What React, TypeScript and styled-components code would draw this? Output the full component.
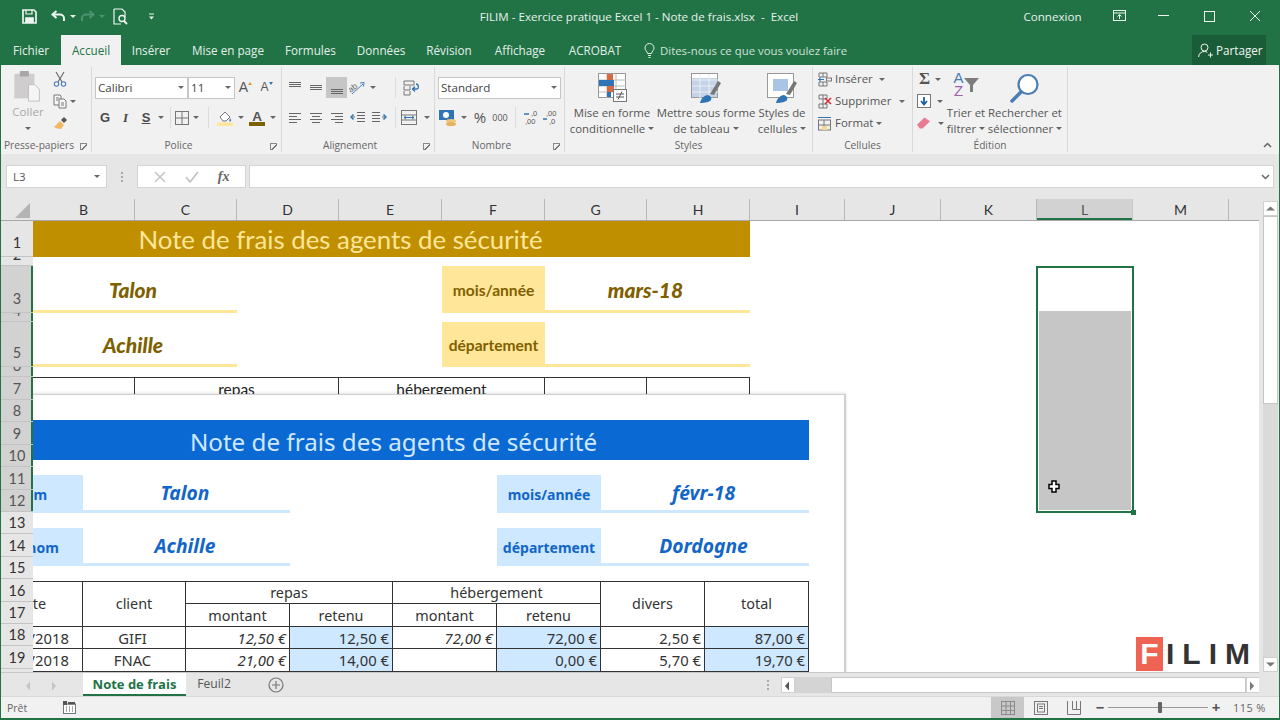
import React from 'react';
import styled, { createGlobalStyle } from 'styled-components';

const GlobalStyle = createGlobalStyle`
  html, body { margin: 0; padding: 0; width: 1280px; height: 720px; overflow: hidden; }
  * { box-sizing: border-box; }
`;

const UI = `"Open Sans", "Liberation Sans", sans-serif`;
const CALIBRI = `Lato, "Liberation Sans", sans-serif`;
const PIC = `"Noto Sans", "Liberation Sans", sans-serif`;
const GREEN = '#217346';

const Window = styled.div`
  width: 1280px;
  height: 720px;
  background: ${GREEN};
  display: flex;
  flex-direction: column;
  padding: 0 1px 2px 1px;
  font-family: ${UI};
  color: #444;
  overflow: hidden;
`;

/* title bar */
const TitleBar = styled.div`
  height: 33px;
  flex: none;
  display: grid;
  grid-template-columns: 441px 394px 1fr;
  align-items: center;
  padding-bottom: 1px;
  color: #e8f1ec;
`;
const Qat = styled.div`
  display: flex;
  align-items: center;
  padding-left: 21px;
`;
const QatSlot = styled.div<{ $w: number }>`
  width: ${p => p.$w}px;
  display: flex;
  align-items: center;
`;
const WhiteCaret = styled.span<{ $dim?: boolean }>`
  width: 0;
  height: 0;
  border-left: 3px solid transparent;
  border-right: 3px solid transparent;
  border-top: 3px solid ${p => (p.$dim ? '#4f9270' : '#e8f1ec')};
  margin-left: 4px;
`;
const Title = styled.div`
  text-align: center;
  font-size: 11.6px;
  white-space: pre;
`;
const WinControls = styled.div`
  display: flex;
  align-items: center;
  justify-content: flex-end;
  padding-right: 2px;
  font-size: 11.6px;
`;
const WinBtn = styled.div<{ $w: number }>`
  width: ${p => p.$w}px;
  display: flex;
  align-items: center;
  justify-content: center;
`;

/* tabs */
const TabBar = styled.div`
  height: 32px;
  flex: none;
  display: flex;
  align-items: stretch;
  padding-top: 2px;
  color: #e4efe9;
  font-size: 11.7px;
`;
const Tab = styled.div<{ $w: number; $active?: boolean }>`
  width: ${p => p.$w}px;
  display: flex;
  align-items: center;
  justify-content: center;
  background: ${p => (p.$active ? '#f1f1f1' : 'transparent')};
  color: ${p => (p.$active ? GREEN : 'inherit')};
`;
const TellMe = styled.div`
  display: flex;
  align-items: center;
  gap: 5px;
  padding-left: 12px;
  width: 560px;
  font-size: 11.4px;
  color: #cfe2d8;
`;
const ShareBtn = styled.div`
  width: 74px;
  background: #1a5c38;
  display: flex;
  align-items: center;
  gap: 3px;
  padding-left: 6px;
  color: #eef5f1;
`;

/* ribbon */
const Ribbon = styled.div`
  height: 89px;
  flex: none;
  background: #f1f1f1;
  display: flex;
  padding: 2px 0 2px 2px;
  position: relative;
  font-size: 11.4px;
  line-height: 15.5px;
  color: #555;
`;
const Group = styled.div<{ $w: number }>`
  width: ${p => p.$w}px;
  flex: none;
  display: flex;
  flex-direction: column;
  border-right: 1px solid #d9d9d9;
`;
const GroupBody = styled.div`
  flex: 1;
  display: flex;
  min-height: 0;
`;
const GroupLabel = styled.div<{ $launcher?: boolean }>`
  height: 17px;
  margin-bottom: -2px;
  padding-top: 1px;
  display: grid;
  grid-template-columns: ${p => (p.$launcher ? '1fr auto 1fr 16px' : '1fr auto 1fr')};
  align-items: center;
  font-size: 10.2px;
  color: #666;
`;
const GroupName = styled.span`
  white-space: nowrap;
`;
const Launcher = styled.span`
  justify-self: end;
  width: 7px;
  height: 7px;
  margin-right: 4px;
  border-left: 1px solid #888;
  border-top: 1px solid #888;
  background: linear-gradient(135deg, transparent 45%, #777 45%, #777 60%, transparent 60%);
`;
const Rows = styled.div<{ $left?: number }>`
  display: flex;
  flex-direction: column;
  gap: 9px;
  padding: 10px 0 0 ${p => p.$left ?? 0}px;
`;
const Row = styled.div`
  height: 21px;
  display: flex;
  align-items: center;
`;
const Tool = styled.div<{ $w: number; $on?: boolean }>`
  width: ${p => p.$w}px;
  height: 21px;
  flex: none;
  display: flex;
  align-items: center;
  justify-content: center;
  background: ${p => (p.$on ? '#c6c6c6' : 'transparent')};
`;
const Caret = styled.span<{ $l?: number }>`
  width: 0;
  height: 0;
  flex: none;
  margin-left: ${p => p.$l ?? 0}px;
  border-left: 3px solid transparent;
  border-right: 3px solid transparent;
  border-top: 3px solid #666;
`;
const ToolSep = styled.span<{ $l?: number; $r?: number }>`
  width: 1px;
  height: 21px;
  flex: none;
  background: #dcdcdc;
  margin-left: ${p => p.$l ?? 0}px;
  margin-right: ${p => p.$r ?? 0}px;
`;
const Combo = styled.div<{ $w: number }>`
  width: ${p => p.$w}px;
  height: 22px;
  flex: none;
  background: #fff;
  border: 1px solid #c6c6c6;
  display: flex;
  align-items: center;
  justify-content: space-between;
  padding: 0 3px 0 2px;
  font-size: 11.6px;
  color: #444;
`;
const FontLetter = styled.span<{ $serif?: boolean; $under?: boolean; $size?: number }>`
  font-family: ${p => (p.$serif ? '"Liberation Serif", serif' : '"Liberation Sans", sans-serif')};
  font-style: ${p => (p.$serif ? 'italic' : 'normal')};
  font-weight: 700;
  font-size: ${p => p.$size ?? 13}px;
  text-decoration: ${p => (p.$under ? 'underline' : 'none')};
  color: #4a4a4a;
`;
const GrowLetter = styled.span<{ $size: number }>`
  font-size: ${p => p.$size}px;
  color: #555;
  display: flex;
  align-items: flex-start;
  font-family: "Liberation Sans", sans-serif;
`;
const Mark = styled.span<{ $color: string; $down?: boolean }>`
  width: 0;
  height: 0;
  margin-top: 2px;
  border-left: 2px solid transparent;
  border-right: 2px solid transparent;
  ${p => (p.$down ? `border-top: 3px solid ${p.$color};` : `border-bottom: 3px solid ${p.$color};`)}
`;
const NumText = styled.span<{ $size: number }>`
  font-size: ${p => p.$size}px;
  color: #555;
`;
const PasteCol = styled.div`
  width: 50px;
  display: flex;
  flex-direction: column;
  align-items: center;
  padding: 4px 0 0 0;
  color: #a8a8a8;
  font-size: 11.6px;
`;
const PasteLabel = styled.span`
  margin-top: 2px;
  margin-bottom: 7px;
`;
const SmallCol = styled.div`
  display: flex;
  flex-direction: column;
  padding-top: 1px;
`;
const SmallRow = styled.div`
  height: 22px;
  display: flex;
  align-items: center;
  gap: 3px;
  white-space: nowrap;
`;
const BigBtn = styled.div<{ $w: number }>`
  width: ${p => p.$w}px;
  flex: none;
  display: flex;
  flex-direction: column;
  align-items: center;
  padding-top: 6px;
  text-align: center;
  white-space: nowrap;
`;
const BigIcon = styled.div`
  height: 32px;
  display: flex;
  align-items: flex-start;
  justify-content: center;
`;
const LabelLine = styled.div`
  display: flex;
  align-items: center;
  gap: 3px;
`;
const SortIcon = styled.div`
  display: flex;
  align-items: center;
  margin-top: -2px;
`;
const AZ = styled.div`
  display: flex;
  flex-direction: column;
  font-size: 15px;
  line-height: 13px;
  font-family: "Liberation Sans", sans-serif;
`;
const AZLetter = styled.span<{ $c: string }>`
  color: ${p => p.$c};
`;
const CellsList = styled.div<{ $w?: number }>`
  padding: 1px 0 0 4px;
  display: flex;
  flex-direction: column;
  ${p => (p.$w ? `width: ${p.$w}px; flex: none;` : '')}
`;
const Sigma = styled.span`
  font-family: "Liberation Serif", serif;
  font-size: 17px;
  font-weight: 700;
  color: #555;
  width: 15px;
  text-align: center;
`;
const Collapse = styled.div`
  position: absolute;
  right: 7px;
  bottom: 3px;
`;

/* formula bar */
const FormulaBar = styled.div`
  height: 43px;
  flex: none;
  background: #e6e6e6;
  display: flex;
  align-items: flex-start;
  padding: 11px 5px 0 5px;
`;
const NameBox = styled.div`
  width: 101px;
  height: 23px;
  flex: none;
  background: #fff;
  border: 1px solid #d4d4d4;
  display: flex;
  align-items: center;
  justify-content: space-between;
  padding: 0 6px;
  font-size: 11.5px;
  color: #555;
`;
const Dots = styled.div`
  width: 30px;
  height: 23px;
  flex: none;
  display: flex;
  flex-direction: column;
  align-items: center;
  justify-content: center;
  gap: 2px;
`;
const Dot = styled.span`
  width: 2px;
  height: 2px;
  background: #aaa;
`;
const FxBox = styled.div`
  width: 109px;
  height: 23px;
  flex: none;
  background: #fff;
  border: 1px solid #d4d4d4;
  display: flex;
  align-items: center;
  justify-content: space-around;
  padding: 0 6px;
`;
const FxText = styled.span`
  font-family: "Liberation Serif", serif;
  font-style: italic;
  font-size: 14px;
  font-weight: 700;
  color: #666;
`;
const FormulaInput = styled.div`
  flex: 1;
  height: 23px;
  margin-left: 3px;
  background: #fff;
  border: 1px solid #d4d4d4;
  display: flex;
  align-items: center;
  justify-content: flex-end;
  padding-right: 3px;
`;

/* sheet */
const SheetWrap = styled.div`
  flex: 1;
  min-height: 0;
  display: flex;
  background: #e6e6e6;
`;
const SheetMain = styled.div`
  width: 1258px;
  flex: none;
  display: flex;
  flex-direction: column;
`;
const ColHeaders = styled.div`
  height: 24px;
  flex: none;
  display: flex;
  background: #e6e6e6;
  border-bottom: 1px solid #a8a8a8;
  font-family: ${CALIBRI};
  font-size: 14px;
  color: #333;
`;
const Corner = styled.div`
  width: 32px;
  flex: none;
  display: flex;
  align-items: flex-end;
  justify-content: flex-end;
  padding: 0 2px 2px 0;
`;
const ColHead = styled.div<{ $w: number; $sel?: boolean }>`
  width: ${p => p.$w}px;
  flex: none;
  display: flex;
  align-items: center;
  justify-content: center;
  margin-top: 2px;
  border-right: 1px solid ${p => (p.$sel ? '#c6c6c6' : '#b8b8b8')};
  background: ${p => (p.$sel ? '#d2d2d2' : 'transparent')};
  color: ${p => (p.$sel ? '#555' : '#333')};
  ${p => (p.$sel ? `box-shadow: inset 0 -2px 0 ${GREEN};` : '')}
`;
const SheetBody = styled.div`
  flex: 1;
  min-height: 0;
  display: flex;
  overflow: hidden;
`;
const RowHeaders = styled.div`
  width: 32px;
  flex: none;
  display: flex;
  flex-direction: column;
  font-family: ${CALIBRI};
  font-size: 14.5px;
  color: #333;
  background: #e6e6e6;
`;
const RowHead = styled.div<{ $h: number; $sel?: boolean }>`
  height: ${p => p.$h}px;
  flex: none;
  overflow: hidden;
  display: flex;
  align-items: flex-end;
  justify-content: center;
  line-height: 20px;
  padding-bottom: ${p => (p.$h > 30 ? 3 : 0)}px;
  border-bottom: 1px solid #c4c4c4;
  background: ${p => (p.$sel ? '#d2d2d2' : 'transparent')};
  color: ${p => (p.$sel ? '#555' : '#333')};
  ${p => (p.$sel ? `box-shadow: inset -2px 0 0 ${GREEN};` : '')}
`;
const Cells = styled.div`
  flex: 1;
  position: relative;
  background: #fff;
  overflow: hidden;
`;
const GoldGrid = styled.div`
  display: grid;
  width: 717px;
  grid-template-columns: 102px 102px 102px 103px 103px 102px 103px;
  grid-template-rows: 36px 9px 47px 9px 45px 10px 23px 23px;
  font-family: ${CALIBRI};
  color: #7f6000;
`;
const GoldBanner = styled.div`
  grid-column: 1 / 8;
  background: #bf8f00;
  color: #ffe699;
  font-size: 25.8px;
  padding-right: 102px;
  display: flex;
  align-items: center;
  justify-content: center;
`;
const Gap = styled.div`
  grid-column: 1 / 8;
`;
const GoldValue = styled.div<{ $span: string }>`
  grid-column: ${p => p.$span};
  border-bottom: 3px solid #ffe699;
  display: flex;
  align-items: center;
  justify-content: center;
  padding: 3px 4px 0 0;
  font-size: 21px;
  font-weight: 900;
  font-style: italic;
`;
const GoldLabel = styled.div`
  background: #ffe699;
  display: flex;
  align-items: center;
  justify-content: center;
  font-size: 15.6px;
  font-weight: 700;
  white-space: nowrap;
`;
const Blank = styled.div<{ $span: string }>`
  grid-column: ${p => p.$span};
`;
const HeadCell = styled.div<{ $span: string; $rows?: number }>`
  grid-column: ${p => p.$span};
  grid-row: span ${p => p.$rows ?? 1};
  border-top: 1px solid #333;
  border-right: 1px solid #333;
  display: flex;
  align-items: center;
  justify-content: center;
  font-size: 15.5px;
  color: #222;
`;

/* pasted picture over the sheet */
const Picture = styled.div`
  position: absolute;
  left: 0;
  top: 173px;
  width: 813px;
  height: 290px;
  background: #fff;
  border-top: 1px solid #d0d0d0;
  border-right: 2px solid #cfcfcf;
  box-shadow: 0 -1px 3px rgba(0, 0, 0, 0.12);
  overflow: hidden;
  font-family: ${PIC};
`;
const PicContent = styled.div`
  width: 829px;
  margin-left: -53px;
  padding-top: 25px;
`;
const PicBanner = styled.div`
  height: 40px;
  background: #0a69d2;
  color: #d0e8ff;
  font-size: 24.2px;
  padding: 3px 2px 0 0;
  display: flex;
  align-items: center;
  justify-content: center;
`;
const PicInfo = styled.div`
  display: grid;
  height: 38px;
  grid-template-columns: 103px 103px 104px 103px 104px 104px 104px 104px;
  margin-top: 15px;
`;
const PicLabel = styled.div`
  background: #cde8ff;
  color: #1266c8;
  font-weight: 700;
  font-size: 14px;
  display: flex;
  align-items: center;
  justify-content: center;
  white-space: nowrap;
`;
const PicValue = styled.div<{ $span: string }>`
  grid-column: ${p => p.$span};
  border-bottom: 3px solid #cde8ff;
  color: #1266c8;
  font-size: 19.3px;
  font-weight: 700;
  font-style: italic;
  padding-right: 3px;
  display: flex;
  align-items: center;
  justify-content: center;
`;
const PicTable = styled.table`
  margin: 15px 0 0 -1px;
  border-collapse: collapse;
  table-layout: fixed;
  width: 829px;
  font-size: 14.8px;
  color: #333;
`;
const Th = styled.th`
  font-weight: 400;
  font-size: 14.4px;
  border: 1.5px solid #333;
  padding: 0;
  height: 22.4px;
`;
const Td = styled.td<{ $blue?: boolean; $it?: boolean; $center?: boolean }>`
  border: 1.5px solid #333;
  height: 22.4px;
  padding: 1px 3px 0 0;
  line-height: 1;
  text-align: ${p => (p.$center ? 'center' : 'right')};
  font-style: ${p => (p.$it ? 'italic' : 'normal')};
  background: ${p => (p.$blue ? '#cde8ff' : '#fff')};
  white-space: nowrap;
  overflow: hidden;
`;

/* selection, cursor, logo */
const Selection = styled.div`
  position: absolute;
  left: 1003px;
  top: 45px;
  width: 98px;
  height: 247px;
  border: 2px solid ${GREEN};
  background: #c6c6c6;
  box-shadow: inset 0 0 0 1px #fff;
`;
const ActiveCell = styled.div`
  height: 43px;
  background: #fff;
`;
const Handle = styled.span`
  position: absolute;
  right: -4px;
  bottom: -4px;
  width: 5px;
  height: 5px;
  background: ${GREEN};
`;
const CursorMark = styled.div`
  position: absolute;
  left: 1015px;
  top: 259px;
  display: flex;
`;
const Logo = styled.div`
  position: absolute;
  right: 5px;
  bottom: 1px;
  display: flex;
  align-items: center;
  font-family: "Liberation Sans", sans-serif;
  font-weight: 700;
`;
const LogoSquare = styled.div`
  width: 27px;
  height: 34px;
  background: #ef6353;
  color: #fff;
  font-size: 30px;
  line-height: 34px;
  text-align: center;
`;
const LogoText = styled.div`
  font-size: 30px;
  letter-spacing: 8px;
  color: #333;
  padding-left: 3px;
  width: 91px;
  white-space: nowrap;
`;

/* scroll bars */
const VScroll = styled.div`
  flex: 1;
  display: flex;
  flex-direction: column;
  align-items: center;
  padding: 4px 0 0 3px;
  background: #e6e6e6;
`;
const ScrollBtn = styled.div<{ $h?: number; $w?: number }>`
  width: ${p => p.$w ?? 15}px;
  height: ${p => p.$h ?? 15}px;
  flex: none;
  background: #fff;
  border: 1px solid #d0d0d0;
  display: flex;
  align-items: center;
  justify-content: center;
`;
const VThumb = styled.div`
  width: 15px;
  height: 188px;
  flex: none;
  background: #fff;
  border: 1px solid #c6c6c6;
`;
const VTrack = styled.div`
  flex: 1;
  width: 15px;
  background: #dadada;
`;
const VFoot = styled.div`
  height: 24px;
  flex: none;
`;

/* sheet tabs */
const TabsBar = styled.div`
  height: 24px;
  flex: none;
  background: #e6e6e6;
  border-top: 1px solid #c8c8c8;
  display: flex;
  align-items: stretch;
  font-size: 12.2px;
`;
const TabNav = styled.div`
  width: 82px;
  flex: none;
  display: flex;
  align-items: center;
  justify-content: center;
  gap: 17px;
`;
const SheetTab = styled.div<{ $active?: boolean; $w: number }>`
  width: ${p => p.$w}px;
  flex: none;
  display: flex;
  align-items: center;
  justify-content: center;
  padding-bottom: 2px;
  background: ${p => (p.$active ? '#fff' : 'transparent')};
  color: ${p => (p.$active ? GREEN : '#555')};
  font-weight: ${p => (p.$active ? 700 : 400)};
  font-size: ${p => (p.$active ? 13 : 12.2)}px;
  ${p => (p.$active ? `box-shadow: inset 0 -2px 0 ${GREEN};` : '')}
`;
const TabSep = styled.span`
  width: 1px;
  height: 15px;
  align-self: center;
  background: #aaa;
`;
const AddTab = styled.div`
  width: 68px;
  flex: none;
  display: flex;
  align-items: center;
  justify-content: center;
`;
const DotsTab = styled.div`
  width: 485px;
  flex: none;
  display: flex;
  align-items: center;
  justify-content: flex-end;
  gap: 12px;
`;
const HScroll = styled.div`
  flex: 1;
  display: flex;
  align-items: center;
`;
const HTrack = styled.div`
  width: 36px;
  height: 16px;
  background: #d4d4d4;
`;
const HThumb = styled.div`
  width: 415px;
  height: 16px;
  background: #fff;
  border: 1px solid #c6c6c6;
`;
const DotColumn = styled.div`
  display: flex;
  flex-direction: column;
  gap: 2px;
`;

/* status bar */
const StatusBar = styled.div`
  height: 22px;
  flex: none;
  background: #f1f1f1;
  border-top: 1px solid #d8d8d8;
  display: flex;
  align-items: center;
  font-size: 10.5px;
  color: #666;
`;
const StatusText = styled.span`
  width: 62px;
  padding-left: 6px;
`;
const StatusRight = styled.div`
  margin-left: auto;
  height: 100%;
  display: flex;
  align-items: center;
`;
const ViewBtn = styled.div<{ $on?: boolean }>`
  width: 33px;
  height: 100%;
  display: flex;
  align-items: center;
  justify-content: center;
  background: ${p => (p.$on ? '#c8c8c8' : 'transparent')};
`;
const ZoomSlider = styled.div`
  width: 100px;
  height: 1px;
  background: #999;
  position: relative;
`;
const ZoomThumb = styled.span`
  position: absolute;
  left: 50px;
  top: -5px;
  width: 4px;
  height: 11px;
  border-radius: 1px;
  background: #666;
`;
const ZoomValue = styled.span`
  width: 55px;
  padding-left: 9px;
  font-size: 11px;
  letter-spacing: 0.4px;
`;
const ZoomSign = styled.span<{ $m?: number }>`
  width: 16px;
  margin-left: ${p => p.$m ?? 0}px;
  text-align: center;
  font-size: 15px;
  line-height: 15px;
  font-weight: 700;
  color: #555;
`;
const Flip = styled.span`
  display: flex;
  transform: scaleX(-1);
`;

/* ---- drawings ---- */
const W = '#eef5f1';

const SaveIcon = () => (
  <svg width="15" height="15" viewBox="0 0 15 15" fill="none" stroke={W} strokeWidth="1.7">
    <path d="M1 1h11l2 2v11H1z" />
    <path d="M4 1v4h6V1" strokeWidth="1.2" />
    <path d="M4 14V9h7v5" fill={W} />
  </svg>
);
const UndoIcon = ({ color = W }: { color?: string }) => (
  <svg width="15" height="12" viewBox="0 0 15 12" fill="none" stroke={color} strokeWidth="2">
    <path d="M5.5 1 1.5 4.5 5.5 8" />
    <path d="M2 4.5h7a4 4 0 0 1 4 4V11" />
  </svg>
);
const PreviewIcon = () => (
  <svg width="16" height="17" viewBox="0 0 16 17" fill="none" stroke={W} strokeWidth="1.2">
    <path d="M1 1h8l3 3v5M1 1v15h7" />
    <circle cx="9" cy="10.5" r="3" strokeWidth="1.4" />
    <path d="m11 13 3 3" strokeWidth="1.8" />
  </svg>
);
const QatMore = () => (
  <svg width="7" height="7" viewBox="0 0 7 7" fill={W}>
    <rect x="1" y="0.5" width="5" height="1" />
    <path d="M1 3.5h5L3.5 6.5z" />
  </svg>
);
const RibbonDisplay = () => (
  <svg width="14" height="12" viewBox="0 0 14 12" fill="none" stroke={W}>
    <rect x="0.5" y="0.5" width="12" height="10" />
    <path d="M1 3h11M6.5 9V5M4.5 6.5l2-2 2 2" />
  </svg>
);
const Minimize = () => (
  <svg width="11" height="2" viewBox="0 0 11 2"><rect width="11" height="1" fill={W} /></svg>
);
const Maximize = () => (
  <svg width="11" height="11" viewBox="0 0 11 11" fill="none" stroke={W}><rect x="0.5" y="0.5" width="10" height="10" /></svg>
);
const CloseX = () => (
  <svg width="12" height="12" viewBox="0 0 12 12" stroke={W}><path d="M1 1l10 10M11 1 1 11" /></svg>
);
const Bulb = () => (
  <svg width="11" height="15" viewBox="0 0 11 15" fill="none" stroke="#e4efe9">
    <path d="M3.5 10.5C3 8 1 7.5 1 5a4.5 4.5 0 0 1 9 0c0 2.5-2 3-2.500 5.500z" />
    <path d="M4 12.500h3M4.500 14.500h2" />
  </svg>
);
const Person = () => (
  <svg width="15" height="15" viewBox="0 0 15 15" fill="none" stroke="#eef5f1">
    <circle cx="6.500" cy="4.500" r="3.500" />
    <path d="M0.500 14c.5-3.500 2.500-5.500 6-5.500 1.200 0 2 .3 2.800.8M10 12h5M12.500 9.500v5" />
  </svg>
);
const Clipboard = () => (
  <svg width="28" height="31" viewBox="0 0 30 34">
    <rect x="0" y="3" width="22" height="27" fill="#cfcdcd" />
    <rect x="6" y="0" width="10" height="6" rx="1" fill="#a9a8a8" />
    <path d="M15.500 15h7l5 5v13h-12z" fill="#f5f5f5" stroke="#bdbdbd" />
  </svg>
);
const Scissors = () => (
  <svg width="14" height="16" viewBox="0 0 14 16" fill="none" stroke="#666" strokeWidth="1.100">
    <path d="M3 1l6 10M11 1 5 11" />
    <circle cx="3.500" cy="13" r="2.200" stroke="#4a7db5" />
    <circle cx="10.500" cy="13" r="2.200" stroke="#4a7db5" />
  </svg>
);
const CopyIcon = () => (
  <svg width="14" height="15" viewBox="0 0 14 15" fill="#f6f6f6" stroke="#777">
    <path d="M1 1h6l1 1v9H1z" />
    <path d="M6 5h5l2 2v7H6z" />
    <path d="M3 4h3M3 6h2M8 9h3M8 11h3" />
  </svg>
);
const PainterIcon = () => (
  <svg width="15" height="14" viewBox="0 0 15 14">
    <path d="M1 11 7 5l4 4-3 4c-3 0-5-1-7-2z" fill="#f0b765" />
    <path d="m8 4 3-3 3 3-3 3z" fill="#555" />
  </svg>
);
const Lines = ({ rows }: { rows: [number, number, number][] }) => (
  <svg width="16" height="15" viewBox="0 0 16 15" stroke="#666">
    {rows.map(([a, b, y], i) => (
      <path key={i} d={`M${a} ${y + 0.5}H${b}`} />
    ))}
  </svg>
);
const Orientation = () => (
  <svg width="17" height="16" viewBox="0 0 17 16" fill="none">
    <text x="0" y="10" fontSize="8.500" fill="#666" fontFamily="Liberation Sans" transform="rotate(-40 5 9)">ab</text>
    <path d="M3 14 14 4M11 3l4-.5-.5 4" stroke="#4a7db5" />
  </svg>
);
const WrapIcon = () => (
  <svg width="17" height="16" viewBox="0 0 17 16" fill="none" stroke="#777">
    <path d="M1 1h10v4H1zM1 6v4h6V6M1 11v4h6v-4" />
    <path d="M9 9h5c2 0 2-5-1-5M12 6.500 9.500 9l2.500 2.500" stroke="#2f75b5" strokeWidth="1.300" />
  </svg>
);
const MergeIcon = () => (
  <svg width="17" height="15" viewBox="0 0 17 15" fill="none" stroke="#777">
    <rect x="0.500" y="0.500" width="15" height="14" />
    <path d="M1 5h15M1 10h15" />
    <path d="M3 7.500h10M5 5.800 3 7.500l2 1.700M11 5.800l2 1.700-2 1.700" stroke="#2f75b5" />
  </svg>
);
const BorderIcon = () => (
  <svg width="14" height="14" viewBox="0 0 14 14" fill="none" stroke="#777">
    <rect x="0.500" y="0.500" width="13" height="13" />
    <path d="M7 1v12M1 7h12" />
  </svg>
);
const FillIcon = () => (
  <svg width="16" height="16" viewBox="0 0 16 16" fill="none">
    <path d="M3 7 8 2l5 5-4 4H6z" fill="#fff" stroke="#777" />
    <path d="M13 8c1 1.500 1.500 2 1 3s-2 .5-1.800-.8z" fill="#4a7db5" />
    <rect x="0" y="12.500" width="16" height="3.500" fill="#ffe699" />
  </svg>
);
const ColorA = () => (
  <svg width="16" height="16" viewBox="0 0 16 16">
    <text x="8" y="11" fontSize="13.500" fontWeight="700" textAnchor="middle" fill="#555" fontFamily="Liberation Sans">A</text>
    <rect x="0" y="12" width="16" height="4" fill="#7f6000" />
  </svg>
);
const Currency = () => (
  <svg width="19" height="18" viewBox="0 0 19 18">
    <rect x="0" y="1" width="15" height="10" fill="#2f75b5" />
    <circle cx="7" cy="6" r="3" fill="#fff" />
    <ellipse cx="12" cy="12" rx="5" ry="2" fill="#f2c77b" />
    <ellipse cx="12" cy="15" rx="5" ry="2" fill="#e5b35e" />
  </svg>
);
const Decimals = ({ top, bottom, flip }: { top: string; bottom: string; flip?: boolean }) => (
  <svg width="17" height="15" viewBox="0 0 17 15" fontFamily="Liberation Sans" fontSize="7.500" fill="#555">
    <text x={flip ? 4 : 9} y="6">{top}</text>
    <text x={flip ? 7 : 3} y="14">{bottom}</text>
    {flip ? <path d="M1 9h4" stroke="#2f75b5" strokeWidth="1.500" /> : <path d="M2 4h5" stroke="#2f75b5" strokeWidth="1.500" />}
  </svg>
);
const CondFormat = () => (
  <svg width="29" height="29" viewBox="0 0 29 29">
    <rect x="0.500" y="0.500" width="27" height="24" fill="#fff" stroke="#999" />
    <path d="M9 1v24M18 1v24M1 7h27M1 13h27M1 19h27" stroke="#bbb" />
    <rect x="9" y="1" width="6" height="6" fill="#d8683f" />
    <rect x="1" y="7" width="15" height="6" fill="#2f75b5" />
    <rect x="9" y="13" width="7" height="6" fill="#d8683f" />
    <rect x="9" y="19" width="4" height="5" fill="#2f75b5" />
    <rect x="15.500" y="16.500" width="13" height="12" fill="#fff" stroke="#777" />
    <path d="M18 21h8M18 24h8M24 18.500l-4 8" stroke="#555" />
  </svg>
);
const TableBrush = ({ full }: { full?: boolean }) => (
  <svg width="30" height="30" viewBox="0 0 30 30">
    <rect x="0.500" y="0.500" width="26" height="24" fill="#fff" stroke="#999" />
    {full ? (
      <rect x="1" y="5" width="25" height="19" fill="#c4d3e6" />
    ) : (
      <rect x="6" y="6" width="15" height="12" fill="#a9c4e4" />
    )}
    {full && <path d="M9 1v24M18 1v24M1 7h26M1 13h26M1 19h26" stroke="#e9eef5" />}
    <path d="M19 21 27 8l3 2-7 12z" fill="#777" />
    <path d="M9 30c1-5 5-8 8-8 3 1 4 3 3 5-1 2-6 3-11 3z" fill="#2f75b5" />
  </svg>
);
const InsertIcon = () => (
  <svg width="15" height="15" viewBox="0 0 15 15" fill="none" stroke="#777">
    <path d="M2 1h8v4H2zM2 10h8v4H2zM6 1v4M6 10v4" />
    <path d="M1 7.500h6M4 5.500l-2.500 2L4 9.500" stroke="#2f75b5" />
    <rect x="9.500" y="6" width="5" height="3" />
  </svg>
);
const DeleteIcon = () => (
  <svg width="15" height="15" viewBox="0 0 15 15" fill="none" stroke="#777">
    <path d="M2 1h8v4H2zM2 10h8v4H2zM6 1v13" />
    <path d="m8 4 6 6M14 4l-6 6" stroke="#d13438" strokeWidth="1.600" />
  </svg>
);
const FormatIcon = () => (
  <svg width="15" height="15" viewBox="0 0 15 15" fill="none" stroke="#777">
    <path d="M1 1.500h13" stroke="#2f75b5" />
    <rect x="1.500" y="4" width="12" height="10" />
    <path d="M2 9h11M7 4v10" />
    <rect x="5" y="10" width="5" height="4" fill="#f5d98b" stroke="none" />
  </svg>
);
const FillDown = () => (
  <svg width="14" height="14" viewBox="0 0 14 14" fill="#fff" stroke="#777">
    <rect x="0.500" y="0.500" width="13" height="13" />
    <path d="M7 3v7M4 7l3 3.500L10 7" fill="none" stroke="#1f5fa8" strokeWidth="1.800" />
  </svg>
);
const Eraser = () => (
  <svg width="14" height="12" viewBox="0 0 14 12">
    <path d="M0 8 8 0l6 4-8 8H3z" fill="#e97a94" />
  </svg>
);
const Funnel = () => (
  <svg width="15" height="15" viewBox="0 0 15 15">
    <path d="M0 1h15L9 8v7H6V8z" fill="#7c7c7c" />
  </svg>
);
const Magnifier = () => (
  <svg width="30" height="30" viewBox="0 0 30 30" fill="none">
    <circle cx="18" cy="11.500" r="9.500" stroke="#4a7db5" strokeWidth="2.200" fill="#fff" />
    <path d="m11 19-9 9" stroke="#4a7db5" strokeWidth="3.500" strokeLinecap="round" />
  </svg>
);
const SmallChevron = ({ up }: { up?: boolean }) => (
  <svg width="9" height="6" viewBox="0 0 9 6" fill="none" stroke="#666" strokeWidth="1.500">
    <path d={up ? 'M1 5l3.500-3.500L8 5' : 'M1 1l3.500 3.500L8 1'} />
  </svg>
);
const CrossMark = () => (
  <svg width="12" height="12" viewBox="0 0 12 12" stroke="#c4c4c4" strokeWidth="1.500"><path d="M1 1l10 10M11 1 1 11" /></svg>
);
const CheckMark = () => (
  <svg width="14" height="12" viewBox="0 0 14 12" fill="none" stroke="#c4c4c4" strokeWidth="1.800"><path d="m1 6 4 5 8-10" /></svg>
);
const CornerMark = () => (
  <svg width="16" height="16" viewBox="0 0 16 16"><path d="M15 1v15H0z" fill="#b4b4b4" /></svg>
);
const Arrow = ({ d, color = '#777' }: { d: 'u' | 'd' | 'l' | 'r'; color?: string }) => {
  const paths = { u: 'M0 5 4.500 1 9 5z', d: 'M0 1h9L4.500 5z', l: 'M5 0v9L1 4.500z', r: 'M1 0v9l4-4.500z' };
  return (
    <svg width="9" height="9" viewBox="0 0 9 6" overflow="visible">
      <path d={paths[d]} fill={color} />
    </svg>
  );
};
const PlusCircle = () => (
  <svg width="16" height="16" viewBox="0 0 16 16" fill="none" stroke="#777">
    <circle cx="8" cy="8" r="7" strokeWidth="1.200" />
    <path d="M8 4v8M4 8h8" strokeWidth="1.200" />
  </svg>
);
const MacroIcon = () => (
  <svg width="13" height="13" viewBox="0 0 13 13">
    <rect x="0.500" y="3" width="12" height="9.500" fill="#fff" stroke="#777" />
    <rect x="0" y="0" width="4" height="4" fill="#555" />
    <rect x="5" y="1" width="7" height="2.500" fill="#555" />
    <path d="M3 6h1M6 6h1M9 6h1M3 8h1M6 8h1M9 8h1M3 10h1M6 10h1M9 10h1" stroke="#555" />
  </svg>
);
const NormalView = () => (
  <svg width="14" height="14" viewBox="0 0 14 14" fill="none" stroke="#8a8a8a">
    <rect x="0.500" y="0.500" width="13" height="13" />
    <path d="M5 1v12M9.500 1v12M1 5h12M1 9.500h12" />
  </svg>
);
const LayoutView = () => (
  <svg width="14" height="14" viewBox="0 0 14 14" fill="none" stroke="#777">
    <rect x="0.500" y="0.500" width="13" height="13" />
    <rect x="3.500" y="3" width="7" height="8" />
    <path d="M5 5.500h4M5 7.500h4" />
  </svg>
);
const BreakView = () => (
  <svg width="14" height="14" viewBox="0 0 14 14" fill="none" stroke="#777">
    <path d="M0.500 0v13.500h13V0M5.500 0v8.500h8M9.500 0v8.500" />
  </svg>
);
const PlusCursor = () => (
  <svg width="12" height="13" viewBox="0 0 12 13">
    <path d="M4 1h4v3.500h3v4H8V12H4V8.500H1v-4h3z" fill="#fff" stroke="#000" strokeWidth="1.500" />
  </svg>
);
const IndentIcon = () => (
  <svg width="16" height="15" viewBox="0 0 16 15" stroke="#666">
    <path d="M7 2.500h8M7 5.500h8M7 8.500h8M7 11.500h8M1 7h4" />
    <path d="M3.500 4.500 1 7l2.500 2.500" fill="none" stroke="#2f75b5" strokeWidth="1.500" />
  </svg>
);

/* ---- data ---- */
const tabs = [
  { t: 'Fichier', w: 60 },
  { t: 'Accueil', w: 60, on: true },
  { t: 'Insérer', w: 60 },
  { t: 'Mise en page', w: 94 },
  { t: 'Formules', w: 71 },
  { t: 'Données', w: 70 },
  { t: 'Révision', w: 66 },
  { t: 'Affichage', w: 76 },
  { t: 'ACROBAT', w: 74 },
];
const columns = [
  { n: 'B', w: 102 }, { n: 'C', w: 102 }, { n: 'D', w: 102 }, { n: 'E', w: 103 }, { n: 'F', w: 103 },
  { n: 'G', w: 102 }, { n: 'H', w: 103 }, { n: 'I', w: 95 }, { n: 'J', w: 96 }, { n: 'K', w: 96 },
  { n: 'L', w: 96, sel: true }, { n: 'M', w: 96 },
];
const rowHeights = [36, 9, 47, 9, 45, 10, 23, 22.4, 22.4, 22.4, 22.4, 22.4, 22.4, 22.4, 22.4, 22.4, 22.4, 22.4, 22.4, 22.4];
const expenses = [
  { date: '05/02/2018', client: 'GIFI', m1: '12,50 €', r1: '12,50 €', m2: '72,00 €', r2: '72,00 €', d: '2,50 €', t: '87,00 €' },
  { date: '12/02/2018', client: 'FNAC', m1: '21,00 €', r1: '14,00 €', m2: '', r2: '0,00 €', d: '5,70 €', t: '19,70 €' },
  { date: '', client: '', m1: '', r1: '', m2: '', r2: '', d: '', t: '' },
];
const alignTop: [number, number, number][] = [[2, 14, 2], [2, 14, 4], [2, 14, 6]];
const alignMid: [number, number, number][] = [[2, 14, 5], [2, 14, 7], [2, 14, 9]];
const alignBot: [number, number, number][] = [[2, 14, 9], [2, 14, 11], [2, 14, 13]];
const leftL: [number, number, number][] = [[2, 14, 3], [2, 10, 6], [2, 14, 9], [2, 10, 12]];
const centerL: [number, number, number][] = [[2, 14, 3], [4, 12, 6], [2, 14, 9], [4, 12, 12]];
const rightL: [number, number, number][] = [[2, 14, 3], [6, 14, 6], [2, 14, 9], [6, 14, 12]];

const GroupTitle = ({ name, launcher }: { name: string; launcher?: boolean }) => (
  <GroupLabel $launcher={launcher}>
    <span />
    <GroupName>{name}</GroupName>
    <span />
    {launcher && <Launcher />}
  </GroupLabel>
);

const App: React.FC = () => (
  <Window>
    <GlobalStyle />
    <TitleBar>
      <Qat>
        <QatSlot $w={29}><SaveIcon /></QatSlot>
        <QatSlot $w={29}><UndoIcon /><WhiteCaret /></QatSlot>
        <QatSlot $w={33}><Flip><UndoIcon color="#4f9270" /></Flip><WhiteCaret $dim /></QatSlot>
        <QatSlot $w={35}><PreviewIcon /></QatSlot>
        <QatMore />
      </Qat>
      <Title>FILIM - Exercice pratique Excel 1 - Note de frais.xlsx  -  Excel</Title>
      <WinControls>
        <WinBtn $w={91}>Connexion</WinBtn>
        <WinBtn $w={43}><RibbonDisplay /></WinBtn>
        <WinBtn $w={45}><Minimize /></WinBtn>
        <WinBtn $w={46}><Maximize /></WinBtn>
        <WinBtn $w={45}><CloseX /></WinBtn>
      </WinControls>
    </TitleBar>

    <TabBar>
      {tabs.map(t => (
        <Tab key={t.t} $w={t.w} $active={t.on}>{t.t}</Tab>
      ))}
      <TellMe><Bulb />Dites-nous ce que vous voulez faire</TellMe>
      <ShareBtn><Person />Partager</ShareBtn>
    </TabBar>

    <Ribbon>
      <Group $w={89}>
        <GroupBody>
          <PasteCol>
            <Clipboard />
            <PasteLabel>Coller</PasteLabel>
            <Caret />
          </PasteCol>
          <SmallCol>
            <SmallRow><Scissors /></SmallRow>
            <SmallRow><CopyIcon /><Caret /></SmallRow>
            <SmallRow><PainterIcon /></SmallRow>
          </SmallCol>
        </GroupBody>
        <GroupTitle name="Presse-papiers" launcher />
      </Group>

      <Group $w={190}>
        <GroupBody>
          <Rows $left={3}>
            <Row>
              <Combo $w={93}>Calibri<Caret /></Combo>
              <Combo $w={47}>11<Caret /></Combo>
              <Tool $w={21}><GrowLetter $size={14}>A<Mark $color="#d69b2a" /></GrowLetter></Tool>
              <Tool $w={21}><GrowLetter $size={12}>A<Mark $color="#2f75b5" $down /></GrowLetter></Tool>
            </Row>
            <Row>
              <Tool $w={20}><FontLetter>G</FontLetter></Tool>
              <Tool $w={21}><FontLetter $serif>I</FontLetter></Tool>
              <Tool $w={20}><FontLetter $under>S</FontLetter></Tool>
              <Tool $w={10}><Caret /></Tool>
              <ToolSep $l={4} $r={3} />
              <Tool $w={16}><BorderIcon /></Tool>
              <Tool $w={12}><Caret /></Tool>
              <ToolSep $l={6} $r={7} />
              <Tool $w={18}><FillIcon /></Tool>
              <Tool $w={13}><Caret /></Tool>
              <Tool $w={19}><ColorA /></Tool>
              <Tool $w={13}><Caret /></Tool>
            </Row>
          </Rows>
        </GroupBody>
        <GroupTitle name="Police" launcher />
      </Group>

      <Group $w={153}>
        <GroupBody>
          <Rows $left={2}>
            <Row>
              <Tool $w={21}><Lines rows={alignTop} /></Tool>
              <Tool $w={21}><Lines rows={alignMid} /></Tool>
              <Tool $w={21} $on><Lines rows={alignBot} /></Tool>
              <Tool $w={21}><Orientation /></Tool>
              <Tool $w={10}><Caret /></Tool>
              <ToolSep $l={17} />
              <Tool $w={30}><WrapIcon /></Tool>
            </Row>
            <Row>
              <Tool $w={21}><Lines rows={leftL} /></Tool>
              <Tool $w={21}><Lines rows={centerL} /></Tool>
              <Tool $w={21}><Lines rows={rightL} /></Tool>
              <Tool $w={21}><IndentIcon /></Tool>
              <Tool $w={21}><Flip><IndentIcon /></Flip></Tool>
              <ToolSep $l={6} />
              <Tool $w={27}><MergeIcon /></Tool>
              <Tool $w={8}><Caret /></Tool>
            </Row>
          </Rows>
        </GroupBody>
        <GroupTitle name="Alignement" launcher />
      </Group>

      <Group $w={130}>
        <GroupBody>
          <Rows $left={3}>
            <Row><Combo $w={123}>Standard<Caret /></Combo></Row>
            <Row>
              <Tool $w={20}><Currency /></Tool>
              <Tool $w={12}><Caret /></Tool>
              <Tool $w={20}><NumText $size={15}>%</NumText></Tool>
              <Tool $w={20}><NumText $size={9}>000</NumText></Tool>
              <ToolSep $l={5} $r={3} />
              <Tool $w={22}><Decimals top=",0" bottom=",00" /></Tool>
              <Tool $w={18}><Decimals top=",00" bottom=",0" flip /></Tool>
            </Row>
          </Rows>
        </GroupBody>
        <GroupTitle name="Nombre" launcher />
      </Group>

      <Group $w={248}>
        <GroupBody>
          <BigBtn $w={94}>
            <BigIcon><CondFormat /></BigIcon>
            <div>Mise en forme</div>
            <LabelLine>conditionnelle<Caret /></LabelLine>
          </BigBtn>
          <BigBtn $w={94}>
            <BigIcon><TableBrush full /></BigIcon>
            <div>Mettre sous forme</div>
            <LabelLine>de tableau<Caret /></LabelLine>
          </BigBtn>
          <BigBtn $w={58}>
            <BigIcon><TableBrush /></BigIcon>
            <div>Styles de</div>
            <LabelLine>cellules<Caret /></LabelLine>
          </BigBtn>
        </GroupBody>
        <GroupTitle name="Styles" />
      </Group>

      <Group $w={100}>
        <GroupBody>
          <CellsList>
            <SmallRow><InsertIcon />Insérer<Caret $l={3} /></SmallRow>
            <SmallRow><DeleteIcon />Supprimer<Caret $l={5} /></SmallRow>
            <SmallRow><FormatIcon />Format<Caret /></SmallRow>
          </CellsList>
        </GroupBody>
        <GroupTitle name="Cellules" />
      </Group>

      <Group $w={155}>
        <GroupBody>
          <CellsList $w={31}>
            <SmallRow><Sigma>Σ</Sigma><Caret /></SmallRow>
            <SmallRow><FillDown /><Caret $l={3} /></SmallRow>
            <SmallRow><Eraser /><Caret $l={5} /></SmallRow>
          </CellsList>
          <BigBtn $w={44}>
            <BigIcon>
              <SortIcon>
                <AZ><AZLetter $c="#4a7db5">A</AZLetter><AZLetter $c="#a05fb0">Z</AZLetter></AZ>
                <Funnel />
              </SortIcon>
            </BigIcon>
            <div>Trier et</div>
            <LabelLine>filtrer<Caret /></LabelLine>
          </BigBtn>
          <BigBtn $w={74}>
            <BigIcon><Magnifier /></BigIcon>
            <div>Rechercher et</div>
            <LabelLine>sélectionner<Caret /></LabelLine>
          </BigBtn>
        </GroupBody>
        <GroupTitle name="Édition" />
      </Group>
      <Collapse><SmallChevron up /></Collapse>
    </Ribbon>

    <FormulaBar>
      <NameBox>L3<Caret /></NameBox>
      <Dots><Dot /><Dot /><Dot /></Dots>
      <FxBox><CrossMark /><CheckMark /><FxText>fx</FxText></FxBox>
      <FormulaInput><SmallChevron /></FormulaInput>
    </FormulaBar>

    <SheetWrap>
      <SheetMain>
        <ColHeaders>
          <Corner><CornerMark /></Corner>
          {columns.map(c => (
            <ColHead key={c.n} $w={c.w} $sel={c.sel}>{c.n}</ColHead>
          ))}
        </ColHeaders>
        <SheetBody>
          <RowHeaders>
            {rowHeights.map((h, i) => (
              <RowHead key={i} $h={h} $sel={i >= 2 && i <= 11}>{i + 1}</RowHead>
            ))}
          </RowHeaders>
          <Cells>
            <GoldGrid>
              <GoldBanner>Note de frais des agents de sécurité</GoldBanner>
              <Gap />
              <GoldValue $span="1 / 3">Talon</GoldValue>
              <Blank $span="3 / 5" />
              <GoldLabel>mois/année</GoldLabel>
              <GoldValue $span="6 / 8">mars-18</GoldValue>
              <Gap />
              <GoldValue $span="1 / 3">Achille</GoldValue>
              <Blank $span="3 / 5" />
              <GoldLabel>département</GoldLabel>
              <GoldValue $span="6 / 8" />
              <Gap />
              <HeadCell $span="1 / 2" $rows={2}>client</HeadCell>
              <HeadCell $span="2 / 4">repas</HeadCell>
              <HeadCell $span="4 / 6">hébergement</HeadCell>
              <HeadCell $span="6 / 7" $rows={2}>divers</HeadCell>
              <HeadCell $span="7 / 8" $rows={2}>total</HeadCell>
            </GoldGrid>

            <Picture>
              <PicContent>
                <PicBanner>Note de frais des agents de sécurité</PicBanner>
                <PicInfo>
                  <PicLabel>nom</PicLabel>
                  <PicValue $span="2 / 4">Talon</PicValue>
                  <Blank $span="4 / 6" />
                  <PicLabel>mois/année</PicLabel>
                  <PicValue $span="7 / 9">févr-18</PicValue>
                </PicInfo>
                <PicInfo>
                  <PicLabel>prénom</PicLabel>
                  <PicValue $span="2 / 4">Achille</PicValue>
                  <Blank $span="4 / 6" />
                  <PicLabel>département</PicLabel>
                  <PicValue $span="7 / 9">Dordogne</PicValue>
                </PicInfo>
                <PicTable>
                  <colgroup>
                    {[103, 103, 104, 103, 104, 104, 104, 104].map((w, i) => <col key={i} width={w} />)}
                  </colgroup>
                  <thead>
                    <tr>
                      <Th rowSpan={2}>date</Th>
                      <Th rowSpan={2}>client</Th>
                      <Th colSpan={2}>repas</Th>
                      <Th colSpan={2}>hébergement</Th>
                      <Th rowSpan={2}>divers</Th>
                      <Th rowSpan={2}>total</Th>
                    </tr>
                    <tr>
                      <Th>montant</Th>
                      <Th>retenu</Th>
                      <Th>montant</Th>
                      <Th>retenu</Th>
                    </tr>
                  </thead>
                  <tbody>
                    {expenses.map((e, i) => (
                      <tr key={i}>
                        <Td $center>{e.date}</Td>
                        <Td $center>{e.client}</Td>
                        <Td $it>{e.m1}</Td>
                        <Td $blue>{e.r1}</Td>
                        <Td $it>{e.m2}</Td>
                        <Td $blue>{e.r2}</Td>
                        <Td>{e.d}</Td>
                        <Td $blue>{e.t}</Td>
                      </tr>
                    ))}
                  </tbody>
                </PicTable>
              </PicContent>
            </Picture>

            <Selection>
              <ActiveCell />
              <Handle />
            </Selection>
            <CursorMark><PlusCursor /></CursorMark>
            <Logo>
              <LogoSquare>F</LogoSquare>
              <LogoText>ILIM</LogoText>
            </Logo>
          </Cells>
        </SheetBody>
        <TabsBar>
          <TabNav><Arrow d="l" color="#c4c4c4" /><Arrow d="r" color="#c4c4c4" /></TabNav>
          <SheetTab $active $w={103}>Note de frais</SheetTab>
          <SheetTab $w={56}>Feuil2</SheetTab>
          <TabSep />
          <AddTab><PlusCircle /></AddTab>
          <DotsTab>
            <DotColumn><Dot /><Dot /><Dot /></DotColumn>
            <ScrollBtn $w={14} $h={16}><Arrow d="l" color="#555" /></ScrollBtn>
          </DotsTab>
          <HScroll>
            <HTrack />
            <HThumb />
            <ScrollBtn $w={14} $h={16}><Arrow d="r" color="#777" /></ScrollBtn>
          </HScroll>
        </TabsBar>
      </SheetMain>
      <VScroll>
        <ScrollBtn><Arrow d="u" /></ScrollBtn>
        <VThumb />
        <VTrack />
        <ScrollBtn><Arrow d="d" /></ScrollBtn>
        <VFoot />
      </VScroll>
    </SheetWrap>

    <StatusBar>
      <StatusText>Prêt</StatusText>
      <MacroIcon />
      <StatusRight>
        <ViewBtn $on><NormalView /></ViewBtn>
        <ViewBtn><LayoutView /></ViewBtn>
        <ViewBtn><BreakView /></ViewBtn>
        <ZoomSign $m={2}>−</ZoomSign>
        <ZoomSlider><ZoomThumb /></ZoomSlider>
        <ZoomSign>+</ZoomSign>
        <ZoomValue>115 %</ZoomValue>
      </StatusRight>
    </StatusBar>
  </Window>
);

export default App;
